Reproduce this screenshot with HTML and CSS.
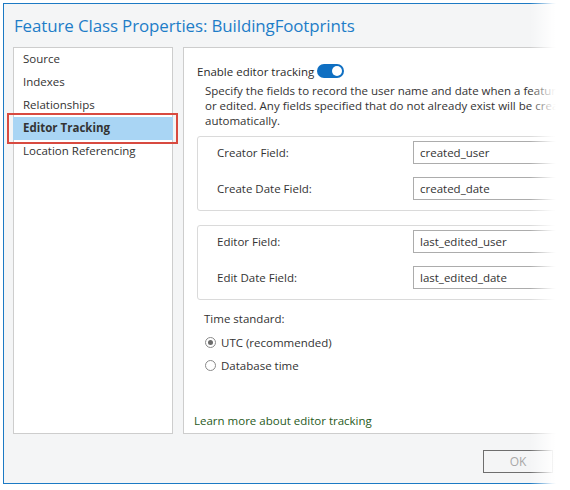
FILE: index.html
```html
<!DOCTYPE html>
<html>
<head>
<meta charset="utf-8">
<link rel="stylesheet" href="styles.css">
</head>
<body>
<div class="window">
  <div class="header">
    <h1 class="title">Feature Class Properties: BuildingFootprints</h1>
  </div>
  <div class="main">
    <ul class="nav">
      <li class="nav-item">Source</li>
      <li class="nav-item">Indexes</li>
      <li class="nav-item">Relationships</li>
      <li class="nav-item selected">Editor Tracking</li>
      <li class="nav-item">Location Referencing</li>
    </ul>
    <div class="panel">
      <div class="enable-row">
        <span>Enable editor tracking</span>
        <span class="toggle"><span class="knob"></span></span>
      </div>
      <p class="desc">Specify the fields to record the user name and date when a feature is created or edited. Any fields specified that do not already exist will be created automatically.</p>
      <div class="group">
        <div class="field-row"><span class="label">Creator Field:</span><span class="input">created_user</span></div>
        <div class="field-row"><span class="label">Create Date Field:</span><span class="input">created_date</span></div>
      </div>
      <div class="group">
        <div class="field-row"><span class="label">Editor Field:</span><span class="input">last_edited_user</span></div>
        <div class="field-row"><span class="label">Edit Date Field:</span><span class="input">last_edited_date</span></div>
      </div>
      <div class="time-label">Time standard:</div>
      <div class="radio-row"><span class="radio checked"></span><span>UTC (recommended)</span></div>
      <div class="radio-row"><span class="radio"></span><span>Database time</span></div>
      <a class="learn">Learn more about editor tracking</a>
    </div>
  </div>
  <div class="footer">
    <span class="btn">OK</span>
  </div>
</div>
<div class="fade"></div>
</body>
</html>
```

FILE: styles.css
```css
html, body {
  margin: 0;
  padding: 0;
  background: #ffffff;
  overflow: hidden;
  width: 570px;
  height: 490px;
}
body {
  position: relative;
  font-family: "Open Sans", "Noto Sans", sans-serif;
  font-size: 11.5px;
  color: #2b2b2b;
}
.window {
  margin: 3px 0 0 3px;
  width: 620px;
  height: 479px;
  border: 1px solid #1c7ac4;
  border-right: none;
  background: #f4f5f6;
  display: flex;
  flex-direction: column;
}
.header {
  height: 43px;
  display: flex;
  align-items: center;
  padding-left: 10px;
}
.title {
  margin: 0;
  font-weight: 400;
  font-size: 16.9px;
  color: #1e7dc8;
  letter-spacing: -0.1px;
}
.main {
  display: flex;
  gap: 10px;
  padding-left: 9px;
  height: 387px;
}
.nav {
  list-style: none;
  margin: 0;
  padding: 0;
  width: 158px;
  flex-shrink: 0;
  border: 1px solid #cdcdcd;
  background: #ffffff;
}
.nav-item {
  height: 23px;
  line-height: 22px;
  padding-left: 9px;
  color: #333333;
}
.nav-item.selected {
  position: relative;
  background: #a9d5f4;
  font-weight: 700;
  margin: 0 -1px 0 -1px;
  padding-left: 10px;
}
.nav-item.selected::after {
  content: "";
  position: absolute;
  left: -6px;
  right: -5px;
  top: -4px;
  bottom: -4px;
  border: 2px solid #d84a40;
}
.panel {
  flex: 1;
  min-width: 0;
  border: 1px solid #cdcdcd;
  background: #ffffff;
  padding: 15px 0 5px 13px;
  display: flex;
  flex-direction: column;
}
.enable-row {
  display: flex;
  align-items: center;
  gap: 3px;
  height: 16px;
}
.toggle {
  width: 27px;
  height: 14px;
  border-radius: 7px;
  background: #0f6fc2;
  display: flex;
  align-items: center;
  justify-content: flex-end;
  padding-right: 2px;
  box-sizing: border-box;
}
.knob {
  width: 10px;
  height: 10px;
  border-radius: 50%;
  background: #ffffff;
}
.desc {
  margin: 4px 0 0 8px;
  width: 425px;
  line-height: 15px;
  color: #333333;
}
.group {
  margin-top: 8px;
  width: 400px;
  border: 1px solid #dadada;
  border-radius: 3px;
  padding: 4px 0 10px 19px;
  display: flex;
  flex-direction: column;
  gap: 13px;
}
.group + .group {
  margin-top: 14px;
}
.field-row {
  display: flex;
  align-items: center;
  height: 23px;
}
.label {
  width: 196px;
  color: #333333;
}
.input {
  flex: 1;
  height: 23px;
  line-height: 21px;
  box-sizing: border-box;
  border: 1px solid #acacac;
  border-right: none;
  padding-left: 6px;
  color: #333333;
}
.time-label {
  margin: 11px 0 0 7px;
  color: #333333;
}
.radio-row {
  display: flex;
  align-items: center;
  gap: 5px;
  margin: 9px 0 0 8px;
  color: #333333;
}
.radio-row + .radio-row {
  margin-top: 8px;
}
.radio {
  width: 11px;
  height: 11px;
  box-sizing: border-box;
  border: 1px solid #8a8a8a;
  border-radius: 50%;
  display: flex;
  align-items: center;
  justify-content: center;
}
.radio.checked::after {
  content: "";
  width: 5px;
  height: 5px;
  border-radius: 50%;
  background: #6b6b6b;
}
.learn {
  margin-top: auto;
  margin-left: -3px;
  color: #285a22;
}
.footer {
  flex: 1;
  display: flex;
  align-items: flex-start;
  padding: 16px 0 0 479px;
}
.btn {
  width: 70px;
  height: 23px;
  box-sizing: border-box;
  border: 1px solid #6e6e6e;
  text-align: center;
  line-height: 21px;
  color: #a8a8a8;
  font-size: 12px;
}
.fade {
  position: absolute;
  top: 0;
  right: 0;
  width: 40px;
  height: 490px;
  background: linear-gradient(to right, rgba(255,255,255,0) 0%, rgba(255,255,255,0.9) 55%, #ffffff 65%);
}
```
